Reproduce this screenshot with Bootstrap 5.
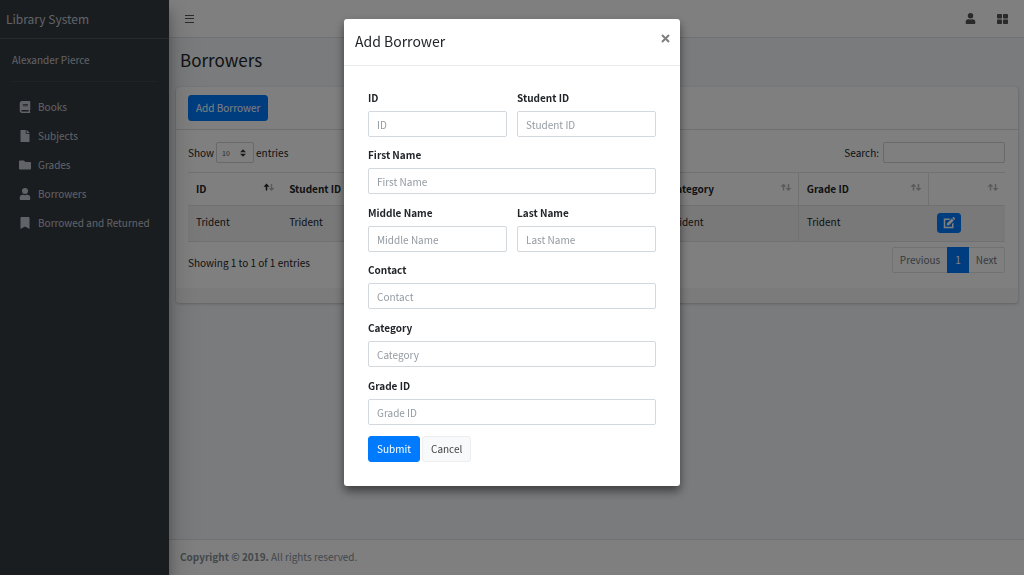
<!DOCTYPE html>
<html lang="en">
<head>
<meta charset="utf-8">
<meta name="viewport" content="width=device-width, initial-scale=1">
<title>Library System</title>
<link href="https://cdn.jsdelivr.net/npm/bootstrap@5.3.0/dist/css/bootstrap.min.css" rel="stylesheet">
<style>
  :root { --blue: #007bff; --line: #dee2e6; }
  body { font-family: "Noto Sans CJK SC", "Open Sans", sans-serif; font-size: 10px; line-height: 16px; color: #212529; background: #f4f6f9; }
  svg { fill: currentColor; display: block; }
  a { text-decoration: none; }
  .btn { --bs-btn-font-size: 10px; --bs-btn-line-height: 16px; --bs-btn-padding-x: 7px; --bs-btn-padding-y: 4px; --bs-btn-border-radius: 3px; }
  .btn-primary { --bs-btn-bg: var(--blue); --bs-btn-border-color: var(--blue); }
  .btn-light { --bs-btn-color: #444; --bs-btn-border-color: #eceef0; }

  .side { width: 169px; flex: none; background: #343a40; color: #c2c7d0; box-shadow: 0 14px 28px rgba(0,0,0,.25), 0 10px 10px rgba(0,0,0,.22); z-index: 2; }
  .side a { color: inherit; }
  .side-brand { height: 39px; padding: 0 6px; font-size: 12px; border-bottom: 1px solid #4b545c; }
  .side-user { margin: 0 12px; height: 43px; border-bottom: 1px solid #40474e; }
  .side-menu { padding: 10px 19px; }
  .side-menu a { height: 29px; gap: 7px; }

  .topbar { height: 38px; padding: 0 16px 0 15px; border-bottom: 1px solid var(--line); background: #fff; color: #555; }
  .topbar button { color: inherit; }
  .tools { gap: 21px; }
  .page-title { font-size: 17px; line-height: 24px; margin: 0; padding: 10px 11px 15px; }
  .panel { margin: 0 6px 0 7px; border: 0; border-radius: 3px; box-shadow: 0 0 1px rgba(0,0,0,.13), 0 1px 3px rgba(0,0,0,.2); --bs-card-cap-bg: transparent; }
  .panel .card-header { padding: 8px 12px; border-color: #dfdfdf; }
  .panel .card-body { padding: 12px 13px 15px 12px; }
  .panel .card-footer { height: 15px; padding: 0; border: 0; background: #f7f7f7; }
  .form-control, .form-select { font-size: 10px; line-height: 16px; border-color: #ced4da; border-radius: 2px; box-shadow: none; }
  .form-control::placeholder { color: #939ba2; opacity: 1; }
  .show-row { gap: 2px; }
  .len { width: 38px; height: 21px; padding: 0 6px 0 5px; font-size: 7px; color: #495057;
    background: url("data:image/svg+xml,%3Csvg xmlns='http://www.w3.org/2000/svg' viewBox='0 0 4 5'%3E%3Cpath fill='%23343a40' d='M2 0L0 2h4zm0 5L0 3h4z'/%3E%3C/svg%3E") no-repeat right 7px center / 6px 8px; }
  .find { width: 122px; height: 21px; }
  .grid { margin: 9px 0 5px; table-layout: fixed; --bs-table-bg: transparent; }
  .grid > :not(caption) > * > * { padding: 8px 6px 8px 8px; border: 0 solid var(--line); border-width: 1px 0 0; color: inherit; vertical-align: top; }
  .grid > thead > tr > th { border-bottom-width: 1px; }
  .grid > tbody > tr > td { border-bottom-width: 1px; height: 36px; background: #f2f2f2; border-top-color: #d4d8dc; }
  .grid th:nth-child(n+8), .grid td:nth-child(8) { border-left-width: 1px; }
  .grid .btn { padding: 3px 5px; margin: -1px 0; }
  .sort { color: #b4b6b9; width: 12px; height: 9px; flex: none; margin-top: 2px; }
  .sort .on { color: #212529; fill: currentColor; }
  .pagination { --bs-pagination-font-size: 10px; --bs-pagination-padding-x: 7px; --bs-pagination-padding-y: 4px; --bs-pagination-color: #6c757d; --bs-pagination-disabled-color: #6c757d; --bs-pagination-disabled-bg: #fff; --bs-pagination-active-bg: var(--blue); --bs-pagination-active-border-color: var(--blue); --bs-pagination-border-radius: 2px; }
  .foot { padding: 9px 11px 10px; border-top: 1px solid var(--line); background: #fff; color: #869099; }

  .modal-dialog { max-width: 336px; margin: 19px auto; }
  .modal-content { border: 0; border-radius: 3px; box-shadow: 0 5px 10px rgba(0,0,0,.5); }
  .modal-header { padding: 10px 10px 10px 11px; height: 47px; border-color: #e9ecef; align-items: flex-start; }
  .modal-title { font-size: 14px; line-height: 24px; font-weight: 400; }
  .x { color: #7f7f7f; line-height: 0; margin-top: 5px; }
  .modal-body { padding: 24px; }
  .field { margin-bottom: 11px; }
  .pair { --bs-gutter-x: 10px; margin-bottom: 10px; }
  .field label, .pair label { display: block; font-weight: 700; margin-bottom: 5px; }
  .modal .form-control { height: 26px; padding: 4px 8px; border-color: #d3d8dd; }
  .actions { gap: 2px; }
  .actions .btn { --bs-btn-padding-x: 8px; }
</style>
</head>
<body>
<svg class="d-none">
  <symbol id="user" viewBox="0 0 448 512"><path d="M224 256a128 128 0 1 0 0-256 128 128 0 0 0 0 256zm90 32h-17a174 174 0 0 1-146 0h-17A134 134 0 0 0 0 422v42c0 27 21 48 48 48h352c27 0 48-21 48-48v-42a134 134 0 0 0-134-134z"/></symbol>
  <symbol id="sort" viewBox="0 0 24 18"><path d="M17 16l-6-6h4.500V2h3v8H23z"/></symbol>
  <symbol id="sortup" viewBox="0 0 24 18"><path d="M7 1l6 6.500H8.500V15h-3V7.500H1z"/></symbol>
</svg>

<div class="d-flex min-vh-100">
  <aside class="side d-flex flex-column">
    <a href="#" class="side-brand d-flex align-items-center">Library System</a>
    <div class="side-user d-flex align-items-center"><a href="#">Alexander Pierce</a></div>
    <nav class="side-menu d-flex flex-column">
      <a href="#" class="d-flex align-items-center"><svg width="12" height="12" viewBox="0 0 448 512"><path fill-rule="evenodd" d="M448 360V24c0-13-11-24-24-24H96C43 0 0 43 0 96v320c0 53 43 96 96 96h328c13 0 24-11 24-24v-16c0-8-4-14-9-19-4-15-4-59 0-74 5-4 9-11 9-19zM128 134c0-3 3-6 6-6h212c3 0 6 3 6 6v20c0 3-3 6-6 6H134c-3 0-6-3-6-6zm0 64c0-3 3-6 6-6h212c3 0 6 3 6 6v20c0 3-3 6-6 6H134c-3 0-6-3-6-6zm253 250H96c-42 0-42-64 0-64h285c-2 17-2 47 0 64z"/></svg>Books</a>
      <a href="#" class="d-flex align-items-center"><svg width="12" height="12" viewBox="-32 0 448 512"><path d="M224 136V0H24C11 0 0 11 0 24v464c0 13 11 24 24 24h336c13 0 24-11 24-24V160H248c-13 0-24-11-24-24zm160-14v6H256V0h6c6 0 12 3 17 7l98 98c4 4 7 11 7 17z"/></svg>Subjects</a>
      <a href="#" class="d-flex align-items-center"><svg width="12" height="12" viewBox="0 0 512 512"><path d="M464 128H272l-64-64H48C21 64 0 85 0 112v288c0 27 21 48 48 48h416c27 0 48-21 48-48V176c0-27-21-48-48-48z"/></svg>Grades</a>
      <a href="#" class="d-flex align-items-center"><svg width="12" height="12"><use href="#user"/></svg>Borrowers</a>
      <a href="#" class="d-flex align-items-center"><svg width="12" height="12" viewBox="-32 0 448 512"><path d="M0 512V48C0 21 21 0 48 0h288c27 0 48 21 48 48v464L192 400z"/></svg>Borrowed and Returned</a>
    </nav>
  </aside>

  <div class="d-flex flex-column flex-grow-1">
    <header class="topbar d-flex align-items-center justify-content-between">
      <button class="btn p-0 border-0" aria-label="Toggle menu"><svg width="11" height="10" viewBox="0 0 11 10"><path d="M1 1h9v1H1zM1 4h9v1H1zM1 8h9v1H1z"/></svg></button>
      <div class="tools d-flex align-items-center">
        <button class="btn p-0 border-0" aria-label="Account"><svg width="11" height="11"><use href="#user"/></svg></button>
        <button class="btn p-0 border-0" aria-label="Apps"><svg width="11" height="10" viewBox="0 0 22 20"><rect width="10" height="9" rx="1.500"/><rect x="12" width="10" height="9" rx="1.500"/><rect y="11" width="10" height="9" rx="1.500"/><rect x="12" y="11" width="10" height="9" rx="1.500"/></svg></button>
      </div>
    </header>

    <main class="flex-grow-1">
      <h1 class="page-title fw-normal">Borrowers</h1>
      <section class="card panel">
        <div class="card-header"><button class="btn btn-primary">Add Borrower</button></div>
        <div class="card-body">
          <div class="d-flex justify-content-between">
            <div class="show-row d-flex align-items-center"><label for="len">Show</label><select id="len" class="form-select len"><option>10</option><option>25</option></select><span>entries</span></div>
            <div class="d-flex align-items-center gap-1"><label for="find">Search:</label><input id="find" type="search" class="form-control find"></div>
          </div>
          <table class="table grid">
            <colgroup><col style="width:11.400%"><col style="width:11.400%"><col style="width:8.800%"><col style="width:8.800%"><col style="width:8.800%"><col style="width:8.800%"><col style="width:16.700%"><col style="width:16%"><col style="width:9.300%"></colgroup>
            <thead><tr>
              <th><div class="d-flex justify-content-between"><span>ID</span><svg class="sort"><use class="on" href="#sortup"/><use href="#sort"/></svg></div></th>
              <th class="text-nowrap">Student ID</th><th>First</th><th>Middle</th><th>Last</th><th>Contact</th>
              <th><div class="d-flex justify-content-between"><span>Category</span><svg class="sort"><use href="#sortup"/><use href="#sort"/></svg></div></th>
              <th><div class="d-flex justify-content-between"><span>Grade ID</span><svg class="sort"><use href="#sortup"/><use href="#sort"/></svg></div></th>
              <th aria-label="Actions"><div class="d-flex justify-content-end"><svg class="sort"><use href="#sortup"/><use href="#sort"/></svg></div></th>
            </tr></thead>
            <tbody><tr>
              <td>Trident</td><td>Trident</td><td>Trident</td><td>Trident</td><td>Trident</td><td>Trident</td><td>Trident</td><td>Trident</td>
              <td><button class="btn btn-primary" aria-label="Edit"><svg width="12" height="12" viewBox="0 0 24 24"><path d="M3 3h12l-3 3H4.500v13.500H18V14l3-3v11.500H1.500V3z"/><path d="M8 12.500L17.500 3l4 4L12 16.500 7.500 17zM18.500 2l1.500-1.500q1-.8 2 0l2 2q.8 1 0 2L22.500 6z"/></svg></button></td>
            </tr></tbody>
          </table>
          <div class="d-flex justify-content-between align-items-start">
            <div class="pt-2">Showing 1 to 1 of 1 entries</div>
            <ul class="pagination mb-0">
              <li class="page-item disabled"><a class="page-link" href="#">Previous</a></li>
              <li class="page-item active"><a class="page-link" href="#">1</a></li>
              <li class="page-item disabled"><a class="page-link" href="#">Next</a></li>
            </ul>
          </div>
        </div>
        <div class="card-footer"></div>
      </section>
    </main>
    <footer class="foot"><strong>Copyright © 2019.</strong> All rights reserved.</footer>
  </div>
</div>

<div class="modal-backdrop show"></div>
<div class="modal show d-block" role="dialog" aria-modal="true" aria-labelledby="dlg">
  <div class="modal-dialog">
    <div class="modal-content">
      <div class="modal-header">
        <h4 class="modal-title" id="dlg">Add Borrower</h4>
        <button class="btn p-0 border-0 x" aria-label="Close"><svg width="9" height="9" viewBox="0 0 9 9"><path d="M1 1l7 7M8 1L1 8" stroke="currentColor" stroke-width="2"/></svg></button>
      </div>
      <form class="modal-body">
        <div class="row pair">
          <div class="col-6"><label for="f1">ID</label><input id="f1" class="form-control" placeholder="ID"></div>
          <div class="col-6"><label for="f2">Student ID</label><input id="f2" class="form-control" placeholder="Student ID"></div>
        </div>
        <div class="field"><label for="f3">First Name</label><input id="f3" class="form-control" placeholder="First Name"></div>
        <div class="row pair">
          <div class="col-6"><label for="f4">Middle Name</label><input id="f4" class="form-control" placeholder="Middle Name"></div>
          <div class="col-6"><label for="f5">Last Name</label><input id="f5" class="form-control" placeholder="Last Name"></div>
        </div>
        <div class="field"><label for="f6">Contact</label><input id="f6" class="form-control" placeholder="Contact"></div>
        <div class="field"><label for="f7">Category</label><input id="f7" class="form-control" placeholder="Category"></div>
        <div class="field"><label for="f8">Grade ID</label><input id="f8" class="form-control" placeholder="Grade ID"></div>
        <div class="actions d-flex"><button type="submit" class="btn btn-primary">Submit</button><button type="button" class="btn btn-light">Cancel</button></div>
      </form>
    </div>
  </div>
</div>
<script src="https://cdn.jsdelivr.net/npm/bootstrap@5.3.0/dist/js/bootstrap.bundle.min.js"></script>
</body>
</html>
